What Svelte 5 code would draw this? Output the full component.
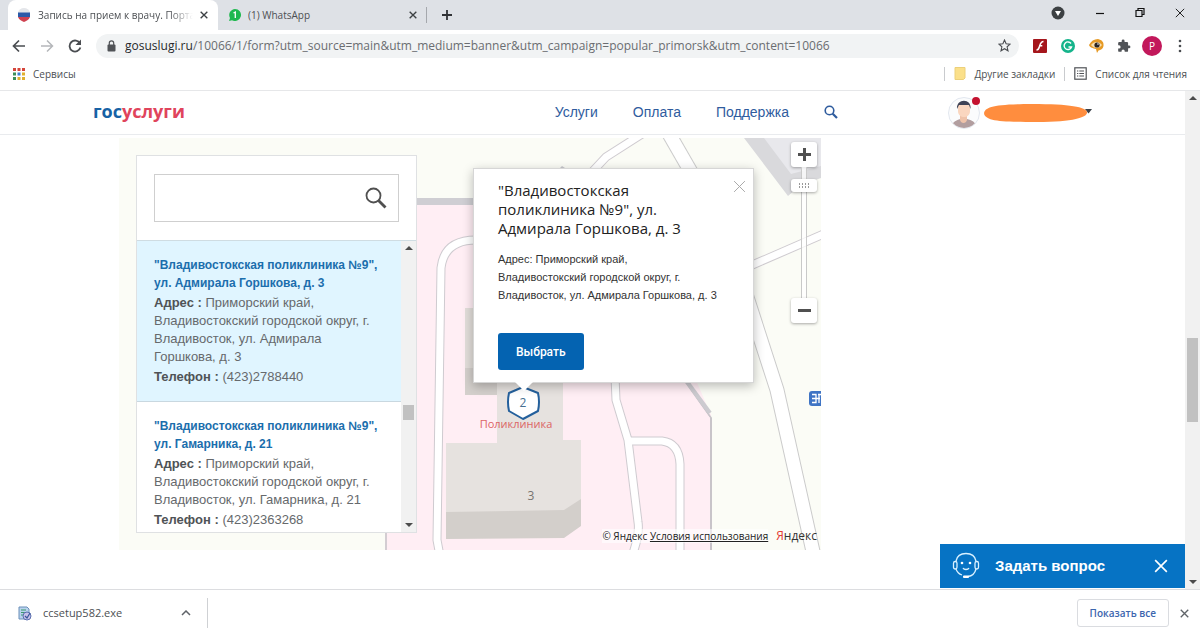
<script>
  const url = { host: 'gosuslugi.ru', path: '/10066/1/form?utm_source=main&utm_medium=banner&utm_campaign=popular_primorsk&utm_content=10066' };
  const appColors = ['#d5453b', '#d5453b', '#d5453b', '#3c8f58', '#3f7fd0', '#e0b02f', '#3c8f58', '#e0b02f', '#e0b02f'];
  const menu = ['Услуги', 'Оплата', 'Поддержка'];
  const clinics = [
    {
      name: '"Владивостокская поликлиника №9", ул. Адмирала Горшкова, д. 3',
      address: 'Приморский край, Владивостокский городской округ, г. Владивосток, ул. Адмирала Горшкова, д. 3',
      phone: '(423)2788440'
    },
    {
      name: '"Владивостокская поликлиника №9", ул. Гамарника, д. 21',
      address: 'Приморский край, Владивостокский городской округ, г. Владивосток, ул. Гамарника, д. 21',
      phone: '(423)2363268'
    }
  ];
  const lanes = [
    'M476 240C454 240 443 250 441 268L437 540L440 556',
    'M615 376L616 400L628 440L638 522Q640 534 632 556',
    'M628 441H662Q679 443 680 464V556',
    'M592 172L606 157L642 134',
    'M750 266L826 233'
  ];
  const streets = ['M746 294L777 390L814 556', 'M668 132L691 172'];
  let query = $state('');
  let selected = $state(0);
</script>

{#snippet cross(size, color, weight)}
  <svg width={size} height={size} viewBox="0 0 12 12" aria-hidden="true"><path d="M1 1l10 10M11 1L1 11" fill="none" stroke={color} stroke-width={weight} /></svg>
{/snippet}

<div class="window">
  <div class="tabs">
    <div class="tab active">
      <svg width="14" height="14" viewBox="0 0 14 14" aria-hidden="true">
        <path d="M1 4c1-2 3-4 6-4s5 2 6 4v1H1z" fill="#e4e6ea" /><path d="M1 4.500h12V9H1z" fill="#2c5aa8" /><path d="M1 9h12c-1 3-4 4-6 5-2-1-5-2-6-5z" fill="#cf4150" />
      </svg>
      <span class="tab-title fade">Запись на прием к врачу. Порта</span>
      <button class="plain" aria-label="Закрыть вкладку">{@render cross(8, '#3c4043', 2)}</button>
    </div>
    <div class="tab second">
      <svg width="12" height="12" viewBox="0 0 12 12" aria-hidden="true">
        <path d="M6 0a6 6 0 1 1-3 11.200L0 12l1-3A6 6 0 0 1 6 0z" fill="#1fb84f" /><path d="M4.500 4L6.300 3v6" fill="none" stroke="#fff" stroke-width="1.300" />
      </svg>
      <span class="tab-title">(1) WhatsApp</span>
      <button class="plain" aria-label="Закрыть вкладку">{@render cross(8, '#3c4043', 2)}</button>
    </div>
    <button class="plain new-tab" aria-label="Новая вкладка">
      <svg width="12" height="12" viewBox="0 0 12 12" aria-hidden="true"><path d="M6 1v10M1 6h10" stroke="#303236" stroke-width="1.800" /></svg>
    </button>
    <div class="controls">
      <button class="plain" aria-label="Поиск вкладок"><svg width="14" height="14" viewBox="0 0 14 14" aria-hidden="true"><circle cx="7" cy="7" r="6.500" fill="#3c4043" /><path d="M4 5h6L7 10z" fill="#fff" /></svg></button>
      <button class="plain" aria-label="Свернуть"><svg width="10" height="12" viewBox="0 0 10 12" aria-hidden="true"><path d="M1 6.500h8" stroke="#111" stroke-width="1.200" /></svg></button>
      <button class="plain" aria-label="Восстановить"><svg width="10" height="12" viewBox="0 0 10 12" aria-hidden="true"><path d="M1 3.500h6v6H1zM3 3.500v-2h6v6H7" fill="none" stroke="#111" stroke-width="1.200" /></svg></button>
      <button class="plain" aria-label="Закрыть">{@render cross(10, '#222', 1.2)}</button>
    </div>
  </div>

  <div class="toolbar">
    <div class="tools">
      <button class="plain" aria-label="Назад"><svg width="14" height="14" viewBox="0 0 14 14" aria-hidden="true"><path d="M13 7H2M7 1.500L1.500 7 7 12.500" fill="none" stroke="#4a4d51" stroke-width="1.700" /></svg></button>
      <button class="plain" aria-label="Вперёд"><svg width="14" height="14" viewBox="0 0 14 14" aria-hidden="true"><path d="M1 7h11M7 1.500L12.500 7 7 12.500" fill="none" stroke="#b5b7ba" stroke-width="1.500" /></svg></button>
      <button class="plain" aria-label="Обновить"><svg width="14" height="14" viewBox="0 0 14 14" aria-hidden="true"><path d="M12 4.500A5.500 5.500 0 1 0 12.400 8.500" fill="none" stroke="#4a4d51" stroke-width="1.800" /><path d="M13 .500V6H7.500z" fill="#4a4d51" /></svg></button>
    </div>
    <div class="omnibox">
      <svg width="9" height="12" viewBox="0 0 9 12" aria-hidden="true"><rect x=".5" y="4.500" width="8" height="7" rx="1" fill="#505357" /><path d="M2.300 5V3a2.200 2.200 0 0 1 4.400 0v2" fill="none" stroke="#505357" stroke-width="1.200" /></svg>
      <span class="address"><b>{url.host}</b>{url.path}</span>
      <button class="plain" aria-label="Добавить в закладки"><svg width="13" height="13" viewBox="0 0 13 13" aria-hidden="true"><path d="M6.500 1l1.600 3.700 4 .400-3 2.700.900 4-3.500-2.100L3 11.800l.900-4-3-2.700 4-.400z" fill="none" stroke="#4a4d51" stroke-width="1.100" /></svg></button>
    </div>
    <div class="tools">
      <svg width="14" height="14" viewBox="0 0 14 14" aria-hidden="true"><rect width="14" height="14" rx="1" fill="#a5161c" /><path d="M10.500 2.500C7.500 2.500 7 6 6.300 8 5.800 10 5 11 3.500 11M6 6.700h3.300" fill="none" stroke="#fff" stroke-width="1.500" /></svg>
      <svg width="14" height="14" viewBox="0 0 14 14" aria-hidden="true"><circle cx="7" cy="7" r="7" fill="#15b48b" /><path d="M10 4.500A3.800 3.800 0 1 0 10.500 8H7.500" fill="none" stroke="#fff" stroke-width="1.400" /></svg>
      <svg width="15" height="14" viewBox="0 0 15 14" aria-hidden="true"><path d="M0 6C2 2 5 0 9 0c4 1 6 3 5.500 7-.500 3-3 4-5 4.500L8 14l-1-4C4 9 1 9 0 6z" fill="#e69a25" /><path d="M2 6c3-4 8-4 11 0-3 4-8 4-11 0z" fill="#f7dfaf" /><circle cx="8" cy="6" r="2.600" fill="#2b2420" /><circle cx="9" cy="5" r=".8" fill="#fff" /></svg>
      <svg width="14" height="14" viewBox="0 0 24 24" aria-hidden="true"><path d="M20.500 11H19V7a2 2 0 0 0-2-2h-4V3.500a2.500 2.500 0 0 0-5 0V5H4a2 2 0 0 0-2 2v3.800h1.500a2.700 2.700 0 0 1 0 5.400H2V20a2 2 0 0 0 2 2h3.800v-1.500a2.700 2.700 0 0 1 5.400 0V22H17a2 2 0 0 0 2-2v-4h1.500a2.500 2.500 0 0 0 0-5z" fill="#505357" /></svg>
      <button class="profile" aria-label="Профиль">P</button>
      <button class="plain" aria-label="Меню"><svg width="4" height="14" viewBox="0 0 4 14" aria-hidden="true"><circle cx="2" cy="2" r="1.300" fill="#4a4d51" /><circle cx="2" cy="7" r="1.300" fill="#4a4d51" /><circle cx="2" cy="12" r="1.300" fill="#4a4d51" /></svg></button>
    </div>
  </div>

  <div class="bookmarks">
    <a href="#apps">
      <svg width="12" height="12" viewBox="0 0 12 12" aria-hidden="true">
        {#each appColors as color, i}<rect x={(i % 3) * 4.5} y={Math.floor(i / 3) * 4.5} width="3" height="3" fill={color} />{/each}
      </svg>Сервисы</a>
    <a class="divided push" href="#other">
      <svg width="12" height="13" viewBox="0 0 12 13" aria-hidden="true"><path d="M1 .500h10v10.500L9.500 12.500H1z" fill="#fbe08a" stroke="#ecd07a" /></svg>Другие закладки</a>
    <a class="divided" href="#reading">
      <svg width="13" height="13" viewBox="0 0 13 13" aria-hidden="true"><rect x=".8" y=".8" width="11.400" height="11.400" fill="none" stroke="#505357" stroke-width="1.200" /><path d="M3 4h1.300M5.300 4H10M3 6.500h1.300M5.300 6.500H10M3 9h1.300M5.300 9H10" stroke="#505357" stroke-width="1.100" /></svg>Список для чтения</a>
  </div>

  <div class="viewport">
    <main>
      <header>
        <a class="logo" href="#home">гос<span>услуги</span></a>
        <nav>
          {#each menu as item}<a href="#menu">{item}</a>{/each}
          <button class="plain" aria-label="Поиск"><svg width="14" height="14" viewBox="0 0 14 14" aria-hidden="true"><circle cx="5.500" cy="5.500" r="4.300" fill="none" stroke="#2f5c9e" stroke-width="1.600" /><path d="M8.700 8.700L13 13" stroke="#2f5c9e" stroke-width="2.200" /></svg></button>
        </nav>
        <button class="plain user" aria-label="Личный кабинет">
          <svg width="144" height="34" viewBox="0 0 144 34" aria-hidden="true">
            <defs><clipPath id="face"><circle cx="16" cy="18" r="15" /></clipPath></defs>
            <circle cx="16" cy="18" r="15.500" fill="#fbfcfd" stroke="#e2e7ef" />
            <g clip-path="url(#face)">
              <path d="M3 34c1-8 6-9 10-10h6c5 1 9 3 10 10z" fill="#b29e9f" />
              <path d="M12 20h7v5c-1 4-6 4-7 0z" fill="#efc3aa" />
              <path d="M10 11c0-6 12-6 12 0v5c0 8-12 8-12 0z" fill="#fad6bf" />
              <path d="M9 14C8 3 24 3 22.500 14L21 10H11z" fill="#3f4356" />
            </g>
            <circle cx="28" cy="6" r="4" fill="#c4122f" />
            <path d="M137 14h7l-3.500 4.500z" fill="#3a4048" />
            <path d="M36 18c1-6 10-9 48-9s54 3 55 8-12 10-50 10-52-1-53-9z" fill="#ff8d3e" />
          </svg>
        </button>
      </header>

      <section class="map" aria-label="Карта">
        <svg class="ground" viewBox="119 138 702 412" preserveAspectRatio="xMinYMin slice" aria-hidden="true">
          <path d="M119 138h702v412H119z" fill="#fbfcf6" />
          <path d="M386 204H620L711 415V550H386z" fill="#ffeef4" />
          <path d="M386 204V550" stroke="#d3cdd2" stroke-width="2" />
          <path d="M410 198h70v7h-70z" fill="#cfced3" />
          <path d="M744 138h77v40l-20 7-13 11z" fill="#d9d9dc" />
          <path d="M764 138h57v28l-30 8z" fill="#e8e8ec" />
          <path d="M600 340H660L711 415V550H600z" fill="#ffeef4" />
          <path d="M683 379L711 418V550" fill="none" stroke="#c8c4c9" stroke-width="2" />
          <path d="M685 379L710 413" fill="none" stroke="#cccbd0" stroke-width="4" />
          <path d="M640 380H683L710 418H640z" fill="#ffeef4" />
          <path d="M465 308h32v87h-32z" fill="#e2deda" />
          <path d="M465 368h32v27h-32z" fill="#d4d0cc" />
          <path d="M497 370h66v70h18v72H446v-69h51z" fill="#e6e2df" />
          <path d="M446 512l118-2 17-11v27l-17 12-118 1z" fill="#d3cfcb" />
          <path d="M558 170l4-4 6 4z" fill="#c8c8cc" />
          {#each lanes as lane}<path d={lane} fill="none" stroke="#cfcbd0" stroke-width="9" />{/each}
          {#each lanes as lane}<path d={lane} fill="none" stroke="#fff" stroke-width="7" />{/each}
          {#each streets as street}
            <path d={street} fill="none" stroke="#cbcbcb" stroke-width="15" />
            <path d={street} fill="none" stroke="#fff" stroke-width="13" />
          {/each}
          <rect x="809" y="391" width="16" height="15" rx="3" fill="#3f74c4" />
          <path d="M812 394.500h4v8h-4M812 398.500h8M818 394.500h3M819 394v9" fill="none" stroke="#fff" stroke-width="1.300" />
          <path d="M523 387l15 6q2 9 0 18l-15 8-14-8q-2-9 0-18z" fill="#fff" stroke="#24609c" stroke-width="2" stroke-linejoin="round" />
          <g text-anchor="middle">
            <text x="523" y="407" font-size="12" fill="#466f91">2</text>
            <text x="516" y="428" font-size="11" fill="#dc6464">Поликлиника</text>
            <text x="531" y="500" font-size="12" fill="#77736f">3</text>
          </g>
        </svg>

        <div class="panel">
          <label class="search">
            <input type="text" bind:value={query} aria-label="Поиск поликлиники" />
            <svg width="22" height="22" viewBox="0 0 22 22" aria-hidden="true"><circle cx="8.500" cy="8.500" r="7" fill="none" stroke="#505050" stroke-width="1.800" /><path d="M13.500 13.500l7 7" stroke="#505050" stroke-width="2.800" /></svg>
          </label>
          <div class="results">
            <div class="items">
              {#each clinics as clinic, i}
                <article class:selected={selected === i}>
                  <h3><a href="#clinic" onclick={() => (selected = i)}>{clinic.name}</a></h3>
                  <p><b>Адрес :</b> {clinic.address}</p>
                  <p><b>Телефон :</b> {clinic.phone}</p>
                </article>
              {/each}
            </div>
            <div class="bar inner"><i class="up"></i><span class="thumb"></span><i class="down"></i></div>
          </div>
        </div>

        <div class="balloon">
          <button class="plain close" aria-label="Закрыть">{@render cross(13, '#a8a8a8', 0.9)}</button>
          <h2>"Владивостокская поликлиника №9", ул. Адмирала Горшкова, д. 3</h2>
          <p>Адрес: Приморский край,<br />Владивостокский городской округ, г.<br />Владивосток, ул. Адмирала Горшкова, д. 3</p>
          <button class="choose">Выбрать</button>
        </div>

        <div class="zoom">
          <button aria-label="Приблизить"><svg width="13" height="13" viewBox="0 0 13 13" aria-hidden="true"><path d="M6.500 0v13M0 6.500h13" stroke="#505050" stroke-width="3" /></svg></button>
          <div class="track"><span></span></div>
          <button aria-label="Отдалить"><svg width="13" height="13" viewBox="0 0 13 13" aria-hidden="true"><path d="M0 6.500h13" stroke="#505050" stroke-width="3" /></svg></button>
        </div>

        <div class="credits">
          <span>© Яндекс <a href="#terms">Условия использования</a></span>
          <strong><em>Я</em>ндекс</strong>
        </div>
      </section>

      <div class="ask">
        <svg width="28" height="28" viewBox="0 0 28 28" aria-hidden="true">
          <g fill="none" stroke="#d9f1ff" stroke-width="1.300"><path d="M4 9C5 4 9 1.500 14 1.500S23 4 24 9M4 17c1 3 3 5 6 6M24 17c-1 4-4 7-8 7.500M11 16c1 2 5 2 6 0" /><rect x="1.500" y="9.500" width="3.500" height="7.500" rx="1.700" /><rect x="23" y="9.500" width="3.500" height="7.500" rx="1.700" /></g>
          <circle cx="10" cy="11" r="1.300" fill="#fff" /><circle cx="18" cy="11" r="1.300" fill="#fff" /><rect x="11" y="23.500" width="6" height="2.500" rx="1" fill="#fff" />
        </svg>
        <button class="plain question">Задать вопрос</button>
        <button class="plain" aria-label="Закрыть">{@render cross(14, '#fff', 1.4)}</button>
      </div>
    </main>
    <div class="bar outer"><i class="up"></i><span class="thumb"></span><i class="down"></i></div>
  </div>

  <footer>
    <div class="download">
      <svg width="14" height="15" viewBox="0 0 14 15" aria-hidden="true"><path d="M1 1h8l2 2v10H1z" fill="#b9d3ee" stroke="#6b8fb8" /><path d="M3 4h5M3 6.500h4M3 9h3" stroke="#3d9a6a" stroke-width="1.200" /><circle cx="9" cy="10" r="4" fill="#c9c3ea" stroke="#5a6fae" /><path d="M7 10l2 2 3-5" fill="none" stroke="#38579a" stroke-width="1.200" /></svg>
      <span>ccsetup582.exe</span>
      <button class="plain" aria-label="Действия с файлом"><svg width="10" height="6" viewBox="0 0 10 6" aria-hidden="true"><path d="M1 5l4-4 4 4" fill="none" stroke="#5f6368" stroke-width="1.500" /></svg></button>
    </div>
    <button class="show-all">Показать все</button>
    <button class="plain" aria-label="Закрыть панель загрузок">{@render cross(9, '#5f6368', 1.8)}</button>
  </footer>
</div>

<style>
  :global(body) { margin: 0; }
  .window, .window * { box-sizing: border-box; }
  .window {
    min-height: 100vh;
    display: grid;
    grid-template-rows: auto auto auto 1fr auto;
    grid-template-columns: minmax(0, 1fr);
    background: #fff;
    color: #4c4f53;
    font: 10px/16px "Open Sans", "Noto Sans", sans-serif;
  }
  svg { display: block; flex: none; }
  button { font: inherit; cursor: pointer; }
  .plain { border: 0; background: none; padding: 0; color: inherit; flex: none; }
  a { color: inherit; text-decoration: none; }
  h2, h3, p { margin: 0; }

  .tabs { display: flex; height: 30px; background: #dee1e6; padding-left: 8px; }
  .tab { display: flex; align-items: center; width: 210px; padding: 0 10px 0 9px; gap: 7px; }
  .active { background: #fff; border-radius: 8px 8px 0 0; }
  .second { border-right: 1px solid #a5a8ad; width: 209px; margin: 7px 0; padding: 0 9px 0 11px; }
  .tab-title { flex: 1; min-width: 0; overflow: hidden; white-space: nowrap; }
  .fade { mask-image: linear-gradient(to right, #000 85%, transparent); }
  .new-tab { margin-left: 14px; }
  .controls { display: flex; align-items: center; gap: 30px; margin-left: auto; padding: 0 15px 4px 0; }

  .toolbar { display: flex; align-items: center; gap: 7px; height: 31px; padding: 0 6px 0 5px; }
  .tools { display: grid; grid-auto-flow: column; grid-auto-columns: 28px; place-items: center; }
  .omnibox { flex: 1; min-width: 0; display: flex; align-items: center; gap: 9px; height: 24px; padding: 0 8px 0 11px; border-radius: 12px; background: #f1f3f4; }
  .address { flex: 1; min-width: 0; overflow: hidden; white-space: nowrap; font-size: 12px; line-height: 18px; color: #6a6d71; }
  .address b { font-weight: 400; color: #27292c; }
  .profile { width: 20px; height: 20px; padding: 0; border: 0; border-radius: 50%; background: #c2185b; color: #fff; line-height: 20px; }

  .bookmarks { display: flex; align-items: center; gap: 9px; height: 30px; padding: 0 13px 4px; border-bottom: 1px solid #e6e7e9; }
  .bookmarks a { display: flex; align-items: center; gap: 8px; }
  .bookmarks .push { margin-left: auto; }
  .bookmarks .divided { border-left: 1px solid #c9cbce; padding-left: 9px; line-height: 14px; }

  .viewport { display: flex; border-bottom: 1px solid #dcdde0; }
  main { position: relative; flex: 1; min-width: 0; padding-bottom: 38px; }
  header { display: flex; align-items: center; height: 44px; padding: 0 93px 2px; border-bottom: 1px solid #e9ebee; }
  .logo { padding-bottom: 2px; font-size: 18px; line-height: 24px; font-weight: 700; color: #1762a5; }
  .logo span { color: #e0445c; }
  nav { display: flex; align-items: center; gap: 35px; margin-left: auto; font: 14px/20px "Liberation Sans", Arial, sans-serif; color: #2f5c9e; }
  .user { margin-left: 110px; }

  .map { position: relative; display: flex; align-items: flex-start; margin: 3px 364px 0 119px; padding: 17px; overflow: hidden; }
  .ground { position: absolute; inset: 0; width: 100%; height: 100%; }
  .panel { position: relative; width: 281px; border: 1px solid #dfe1e3; background: #fff; }
  .search { display: flex; align-items: center; height: 48px; margin: 18px 17px; padding-right: 11px; border: 1px solid #cfcfcf; }
  .search input { flex: 1; min-width: 0; height: 100%; border: 0; outline: 0; padding: 0 12px; background: none; font: 14px/20px "Liberation Sans", Arial, sans-serif; }
  .results { display: flex; height: 292px; border-top: 1px solid #cfdce2; }
  .items { flex: 1; overflow: hidden; font: 13px/18px "Liberation Sans", Arial, sans-serif; color: #66696c; }
  article { padding: 15px 16px 15px 17px; border-bottom: 1px solid #c9d8e0; }
  .selected { background: #e0f5ff; }
  h3 { font-size: 12px; line-height: 18px; color: #1b6ead; }
  article p { margin-top: 2px; }
  article b { color: #4f5356; }

  .bar { display: flex; flex-direction: column; align-items: center; width: 15px; flex: none; background: #f1f1f1; padding: 5px 0; }
  .bar i { border: 4px solid transparent; border-top: 0; border-bottom: 4px solid #4c4c4c; }
  .bar .down { border-bottom: 0; border-top: 4px solid #4c4c4c; margin-top: auto; }
  .bar .thumb { width: 11px; background: #c1c1c1; }
  .inner .thumb { height: 15px; margin-top: 155px; }
  .outer .thumb { height: 84px; margin-top: 238px; }

  .balloon { position: absolute; left: 354px; top: 30px; width: 281px; padding: 12px 24px; border: 1px solid #d6d6d6; background: #fff; box-shadow: 0 3px 10px #0004; color: #222; }
  .balloon::after { content: ""; position: absolute; left: 41px; top: 100%; border: 9px solid transparent; border-top-color: #fff; border-bottom: 0; }
  .balloon h2 { width: 200px; font-size: 15px; line-height: 19px; font-weight: 400; }
  .balloon p { margin: 12px 0 29px; font: 11px/18px "Liberation Sans", Arial, sans-serif; color: #333; }
  .close { position: absolute; right: 7px; top: 11px; }
  .choose { display: block; height: 37px; padding: 0 18px; border: 0; border-radius: 3px; background: #0463b1; color: #fff; font: 500 12px/18px Roboto, Arial, sans-serif; }

  .zoom { position: absolute; right: 4px; top: 4px; display: flex; flex-direction: column; align-items: center; }
  .zoom button { display: flex; align-items: center; justify-content: center; width: 26px; height: 25px; padding: 0; border: 0; border-radius: 3px; background: #fff; box-shadow: 0 1px 3px #0005; }
  .track { display: flex; justify-content: center; width: 6px; height: 131px; padding-top: 12px; background: #fffb; border: 1px solid #c9c9c9; border-width: 0 1px; }
  .track span { flex: none; width: 26px; height: 13px; border-radius: 3px; background: #fff; box-shadow: 0 1px 3px #0005; }
  .track span::before { content: ""; display: block; width: 10px; height: 5px; margin: 4px auto; background: linear-gradient(#fff, #fff) center / 100% 1px no-repeat, repeating-linear-gradient(to right, #999 0 1px, transparent 1px 3px); }

  .credits { position: absolute; right: 4px; bottom: 4px; display: flex; align-items: center; gap: 8px; color: #222; white-space: nowrap; }
  .credits > span { background: #fff9; line-height: 14px; }
  .credits a { text-decoration: underline; }
  .credits strong { font-size: 12px; line-height: 20px; font-weight: 400; color: #333; }
  .credits em { font-style: normal; color: #e33b32; }

  .ask { position: absolute; right: 0; bottom: 1px; display: flex; align-items: center; width: 245px; height: 44px; padding: 0 17px 0 12px; background: #0673c4; color: #fff; }
  .question { flex: 1; text-align: left; margin-left: 15px; font: 700 15px/20px "Liberation Sans", Arial, sans-serif; }

  footer { display: flex; align-items: center; gap: 11px; height: 38px; padding: 8px 11px 0 0; }
  .download { display: flex; align-items: center; gap: 11px; width: 208px; height: 100%; margin-right: auto; padding: 0 16px 0 18px; border-right: 1px solid #cfd1d4; }
  .download span { flex: 1; font-size: 11px; }
  .show-all { height: 28px; padding: 0 12px; border: 1px solid #dadce0; border-radius: 3px; background: #fff; color: #3c66ae; font-weight: 600; }
</style>
